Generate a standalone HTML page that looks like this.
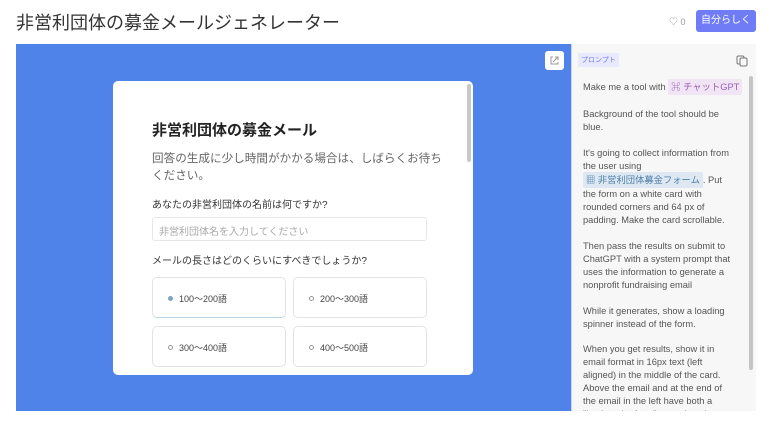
<!DOCTYPE html>
<html><head><meta charset="utf-8"><style>
*{box-sizing:border-box;margin:0;padding:0}
body{width:768px;height:425px;background:#fff;font-family:"Liberation Sans","Noto Sans CJK JP",sans-serif;position:relative;overflow:hidden;color:#222}
.abs{position:absolute}
.title{left:16px;top:9px;font-size:18px;color:#333;white-space:nowrap}
.like{left:669px;top:15px;font-size:9px;color:#999}
.btn{left:696px;top:10px;width:60px;height:22px;background:#6f7cf6;color:#fff;border-radius:3px;font-size:10px;text-align:center;line-height:22px}
.blue{left:16px;top:44px;width:555px;height:367px;background:#4f83ea}
.ext{left:545px;top:51px;width:19px;height:19px;background:#fff;border-radius:3px}
.side{left:571px;top:44px;width:185px;height:367px;background:#f7f7f8;border-left:1px solid #c8d2f4}
.card{left:113px;top:81px;width:360px;height:294px;background:#fff;border-radius:5px;overflow:hidden}
.sb{left:467px;top:84px;width:4px;height:78px;background:#c8c8c8;border-radius:2px}
.opt{position:absolute;width:134px;height:41px;border:1px solid #e3e3e3;border-radius:5px;font-size:9px;color:#444;padding:14px 0 0 15px}
.opt i{display:inline-block;width:5px;height:5px;border:1px solid #999;border-radius:50%;margin-right:6px;vertical-align:1px}
.pwrap{left:583px;top:79px;width:164px;height:332px;overflow:hidden}
.ptxt{width:152px;font-size:9.3px;line-height:12.9px;color:#555}
.tag{display:inline-block;padding:0 3px;border-radius:2px;line-height:16px}
</style></head><body>
<div class="abs title">非営利団体の募金メールジェネレーター</div>
<div class="abs like">♡ 0</div>
<div class="abs btn">自分らしく</div>
<div class="abs blue"></div>
<div class="abs ext"><svg width="19" height="19"><path d="M8 6H6v7h7v-2M10 6h3v3M13 6l-5 5" stroke="#999" fill="none" stroke-width="1"/></svg></div>
<div class="abs card">
 <div class="abs" style="left:39px;top:38px;font-size:15px;font-weight:bold;color:#222">非営利団体の募金メール</div>
 <div class="abs" style="left:39px;top:69px;width:300px;font-size:11.6px;line-height:17px;color:#666;white-space:nowrap">回答の生成に少し時間がかかる場合は、しばらくお待ち<br>ください。</div>
 <div class="abs" style="left:39px;top:115px;font-size:10px;color:#333">あなたの非営利団体の名前は何ですか?</div>
 <div class="abs" style="left:39px;top:136px;width:275px;height:24px;border:1px solid #e6e6e6;border-radius:3px;font-size:10px;color:#aaa;padding:5px 0 0 6px">非営利団体名を入力してください</div>
 <div class="abs" style="left:39px;top:171px;font-size:10px;color:#333">メールの長さはどのくらいにすべきでしょうか?</div>
 <div class="opt" style="left:39px;top:196px;border-bottom-color:#bcd5e8"><i style="background:#7aa6c0;border-color:#7aa6c0"></i>100〜200語</div>
 <div class="opt" style="left:180px;top:196px"><i></i>200〜300語</div>
 <div class="opt" style="left:39px;top:245px"><i></i>300〜400語</div>
 <div class="opt" style="left:180px;top:245px"><i></i>400〜500語</div>
</div>
<div class="abs sb"></div>
<div class="abs side"></div>
<div class="abs" style="left:578px;top:53px;background:#e8e9fc;color:#6f7cf6;font-size:7px;padding:2px 3px;border-radius:2px">プロンプト</div>
<div class="abs" style="left:736px;top:54px"><svg width="12" height="12"><rect x="1" y="1" width="7" height="8" rx="1.5" fill="none" stroke="#777"/><rect x="4" y="3" width="7" height="8" rx="1.5" fill="#f7f7f8" stroke="#777"/></svg></div>
<div class="abs pwrap"><div class="ptxt"><span style="white-space:nowrap">Make me a tool with <span class="tag" style="background:#f0e4f5;color:#9a62b0">⌘ チャットGPT</span></span><br><br>Background of the tool should be blue.<br><br>It's going to collect information from the user using<br><span class="tag" style="background:#dde8f3;color:#4e7fa8">▦ 非営利団体募金フォーム</span>. Put the form on a white card with rounded corners and 64 px of padding. Make the card scrollable.<br><br>Then pass the results on submit to ChatGPT with a system prompt that uses the information to generate a nonprofit fundraising email<br><br>While it generates, show a loading spinner instead of the form.<br><br>When you get results, show it in email format in 16px text (left aligned) in the middle of the card. Above the email and at the end of the email in the left have both a "back to the form" arrow icon button and a copy</div></div>
<div class="abs" style="left:749px;top:76px;width:4px;height:294px;background:#c4c4c4;border-radius:2px"></div>
</body></html>
